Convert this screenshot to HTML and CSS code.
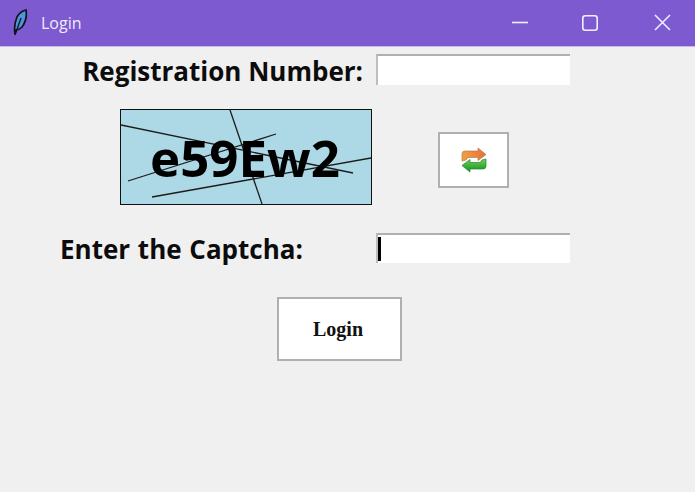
FILE: index.html
```html
<!DOCTYPE html>
<html lang="en">
<head>
    <meta charset="UTF-8">
    <meta name="viewport" content="width=device-width, initial-scale=1.0">
    <title>Login</title>
    <link rel="stylesheet" href="styles.css">
</head>
<body>
    <div class="titlebar">
        <svg class="feather" width="18" height="28" viewBox="0 0 18 28">
            <path d="M4 25 C3 20 4 13 6 8 C8 4 11 2 15 1 C16 7 14 14 11 18 C9 20 7 21 5 21 Z" fill="#4f94d8" stroke="#10131c" stroke-width="1.7"/>
            <path d="M4 26 L10 9" stroke="#10131c" stroke-width="1.3" fill="none"/>
        </svg>
        <span class="window-title">Login</span>
        <div class="window-controls">
            <svg class="control" width="72" height="46" viewBox="0 0 72 46">
                <path d="M22 22.5 H38" stroke="#f3eefc" stroke-width="1.6" fill="none"/>
            </svg>
            <svg class="control" width="72" height="46" viewBox="0 0 72 46">
                <rect x="20.8" y="15.8" width="14.4" height="14.4" rx="2.5" stroke="#f3eefc" stroke-width="1.6" fill="none"/>
            </svg>
            <svg class="control" width="47" height="46" viewBox="0 0 47 46">
                <path d="M21 15 L36 30 M36 15 L21 30" stroke="#f3eefc" stroke-width="1.5" fill="none"/>
            </svg>
        </div>
    </div>

    <div class="login-form">
        <div class="label label-reg">Registration Number:</div>
        <div class="entry"></div>

        <div class="captcha">
            <svg class="captcha-lines" width="250" height="94" viewBox="0 0 250 94">
                <path d="M0 15 L232 63" />
                <path d="M109 0 L141 94" />
                <path d="M7 71 L155 24" />
                <path d="M31 87 L250 48" />
            </svg>
            <span class="captcha-text">e59Ew2</span>
        </div>
        <button class="refresh-button" type="button">
            <svg width="26" height="26" viewBox="0 0 26 26">
                <defs>
                    <linearGradient id="orange" x1="0" y1="0" x2="1" y2="0">
                        <stop offset="0" stop-color="#f0a040"/>
                        <stop offset="1" stop-color="#e8703a"/>
                    </linearGradient>
                    <linearGradient id="green" x1="0" y1="0" x2="0" y2="1">
                        <stop offset="0" stop-color="#6fd05a"/>
                        <stop offset="1" stop-color="#129020"/>
                    </linearGradient>
                </defs>
                <path d="M1 14 V7 Q1 4 4 4 H17 V1 L25 7.5 L17 13.5 V10.5 H8 Q6 10.5 5 13 Z" fill="url(#orange)" stroke="#b9795a" stroke-width="0.7"/>
                <path d="M25 12 V19 Q25 22 22 22 H9 V25 L1 18.5 L9 12.5 V15.5 H18 Q20 15.5 21 13 Z" fill="url(#green)" stroke="#1d8a2a" stroke-width="0.7"/>
            </svg>
        </button>

        <div class="label label-captcha">Enter the Captcha:</div>
        <div class="entry entry-captcha"><span class="caret"></span></div>

        <button class="login-button" type="button">Login</button>
    </div>
</body>
</html>
```

FILE: styles.css
```css
body {
    margin: 0;
    background-color: #f0f0f0;
    font-family: "Open Sans", sans-serif;
}
.titlebar {
    display: flex;
    align-items: center;
    height: 46px;
    background-color: #7e5ad0;
    border-bottom: 1px solid #c9b8ec;
}
.feather {
    margin-left: 11px;
}
.window-title {
    margin-left: 12px;
    color: #f0eafb;
    font-size: 16px;
}
.window-controls {
    display: flex;
    margin-left: auto;
    margin-right: 14px;
}
.control {
    display: block;
}
.login-form {
    display: grid;
    grid-template-columns: 376px 194px;
    grid-template-rows: 31px 120px 58px 98px;
    padding-top: 7px;
}
.label {
    font-size: 26px;
    font-weight: bold;
    color: #0c0c0c;
    line-height: 34px;
    white-space: nowrap;
}
.label-reg {
    justify-self: end;
    margin-right: 13px;
}
.label-captcha {
    margin-left: 60px;
    margin-top: 27px;
    word-spacing: 1px;
}
.entry {
    height: 31px;
    box-sizing: border-box;
    background-color: #fff;
    border-top: 2px solid #b0b0b0;
    border-left: 2px solid #bdbdbd;
}
.entry-captcha {
    height: 30px;
    margin-top: 28px;
}
.captcha {
    position: relative;
    width: 252px;
    height: 96px;
    margin-left: 120px;
    margin-top: 24px;
    padding-right: 2px;
    box-sizing: border-box;
    background-color: #add8e6;
    border: 1px solid #111;
    text-align: center;
}
.captcha-lines {
    position: absolute;
    left: 0;
    top: 0;
}
.captcha-lines path {
    stroke: #1c1c1c;
    stroke-width: 1.3;
    fill: none;
}
.captcha-text {
    position: relative;
    font-size: 51px;
    font-weight: bold;
    line-height: 94px;
    color: #000;
}
.refresh-button {
    width: 71px;
    height: 56px;
    margin-left: 62px;
    margin-top: 47px;
    padding: 0;
    background-color: #fff;
    border: 2px solid #b0b0b0;
}
.refresh-button svg {
    display: block;
    margin: 0 auto;
}
.caret {
    display: block;
    width: 3px;
    height: 24px;
    margin-top: 2px;
    background-color: #000;
}
.login-button {
    grid-column: 1 / 3;
    width: 125px;
    height: 64px;
    margin-left: 277px;
    margin-top: 34px;
    padding: 0 3px 0 0;
    background-color: #fff;
    border: 2px solid #b0b0b0;
    font-family: "Liberation Serif", serif;
    font-size: 20px;
    font-weight: bold;
    color: #111;
}
```
